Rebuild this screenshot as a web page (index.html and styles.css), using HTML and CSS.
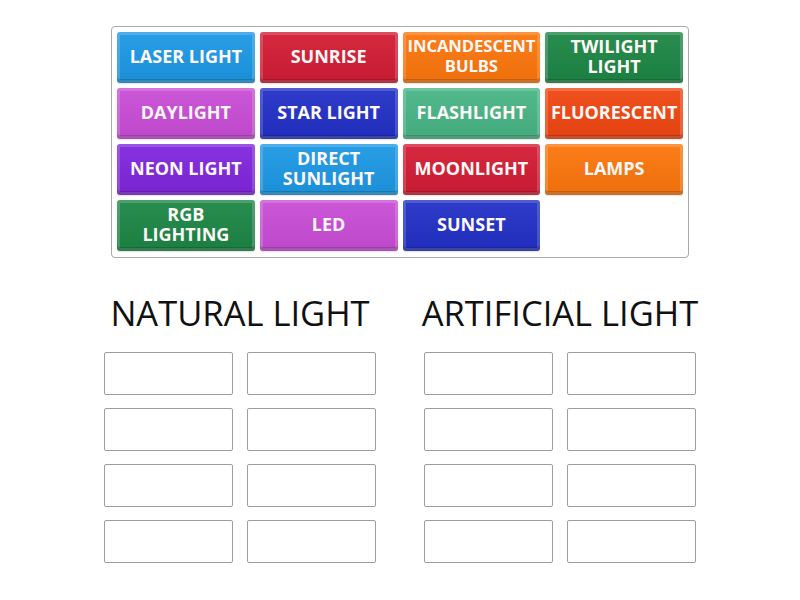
FILE: index.html
```html
<!DOCTYPE html>
<html lang="en">
<head>
<meta charset="utf-8">
<title>Group sort</title>
<link rel="stylesheet" href="styles.css">
</head>
<body>
<div class="page">
  <div class="bank">
    <div class="tile c-sky">LASER LIGHT</div>
    <div class="tile c-red">SUNRISE</div>
    <div class="tile tile-fit c-orange">INCANDESCENT BULBS</div>
    <div class="tile c-green">TWILIGHT LIGHT</div>
    <div class="tile c-pink">DAYLIGHT</div>
    <div class="tile c-blue">STAR LIGHT</div>
    <div class="tile c-teal">FLASHLIGHT</div>
    <div class="tile c-vermil">FLUORESCENT</div>
    <div class="tile c-purple">NEON LIGHT</div>
    <div class="tile c-sky">DIRECT SUNLIGHT</div>
    <div class="tile c-red">MOONLIGHT</div>
    <div class="tile c-orange">LAMPS</div>
    <div class="tile tile-narrow c-green">RGB LIGHTING</div>
    <div class="tile c-pink">LED</div>
    <div class="tile c-blue">SUNSET</div>
  </div>

  <div class="groups">
    <section class="group">
      <h2 class="group-title">NATURAL LIGHT</h2>
      <div class="slots">
        <div class="slot"></div><div class="slot"></div>
        <div class="slot"></div><div class="slot"></div>
        <div class="slot"></div><div class="slot"></div>
        <div class="slot"></div><div class="slot"></div>
      </div>
    </section>
    <section class="group">
      <h2 class="group-title">ARTIFICIAL LIGHT</h2>
      <div class="slots">
        <div class="slot"></div><div class="slot"></div>
        <div class="slot"></div><div class="slot"></div>
        <div class="slot"></div><div class="slot"></div>
        <div class="slot"></div><div class="slot"></div>
      </div>
    </section>
  </div>
</div>
</body>
</html>
```

FILE: styles.css
```css
html, body {
  margin: 0;
  padding: 0;
  background: #ffffff;
}

body {
  font-family: "Open Sans", "Liberation Sans", sans-serif;
  color: #111111;
}

.page {
  width: 800px;
  height: 600px;
  padding-top: 26px;
  box-sizing: border-box;
}

.bank {
  width: 578px;
  margin: 0 auto;
  box-sizing: border-box;
  border: 1px solid #a9a9a9;
  border-radius: 4px;
  padding: 5px 5px 6px 5px;
  display: grid;
  grid-template-columns: repeat(4, 1fr);
  grid-auto-rows: 51px;
  column-gap: 5px;
  row-gap: 5px;
}

.tile {
  display: flex;
  align-items: center;
  justify-content: center;
  text-align: center;
  padding: 0 1px 3px;
  border-radius: 3px;
  font-weight: 700;
  font-size: 18px;
  line-height: 20px;
  color: #fdf7f7;
  box-shadow:
    inset 0 -4px 0 rgba(0, 0, 0, 0.16),
    inset 0 0 0 3px rgba(255, 255, 255, 0.17),
    0 1px 1px rgba(0, 0, 0, 0.12);
  background-image: linear-gradient(to bottom, rgba(255,255,255,0.06), rgba(0,0,0,0.06));
}

.tile-fit {
  font-size: 16.7px;
  letter-spacing: -0.1px;
}

.tile-narrow {
  padding-left: 8px;
  padding-right: 8px;
}

.c-sky    { background-color: #1c98e4; }
.c-red    { background-color: #d21c34; }
.c-orange { background-color: #fb760c; }
.c-green  { background-color: #1d8645; }
.c-pink   { background-color: #c84dd6; }
.c-blue   { background-color: #2130c6; }
.c-teal   { background-color: #48b586; }
.c-vermil { background-color: #ef4611; }
.c-purple { background-color: #7f26dd; }

.groups {
  display: flex;
  justify-content: center;
  gap: 48px;
  margin-top: 38px;
}

.group {
  width: 272px;
  display: flex;
  flex-direction: column;
  align-items: center;
}

.group-title {
  margin: 0;
  font-weight: 400;
  font-size: 34.5px;
  line-height: 34px;
  color: #111111;
  white-space: nowrap;
}

.slots {
  margin-top: 22px;
  display: grid;
  grid-template-columns: 129px 129px;
  grid-auto-rows: 43px;
  column-gap: 14px;
  row-gap: 13px;
}

.slot {
  box-sizing: border-box;
  border: 1px solid #9e9e9e;
  border-radius: 2px;
  background: #ffffff;
}
```
